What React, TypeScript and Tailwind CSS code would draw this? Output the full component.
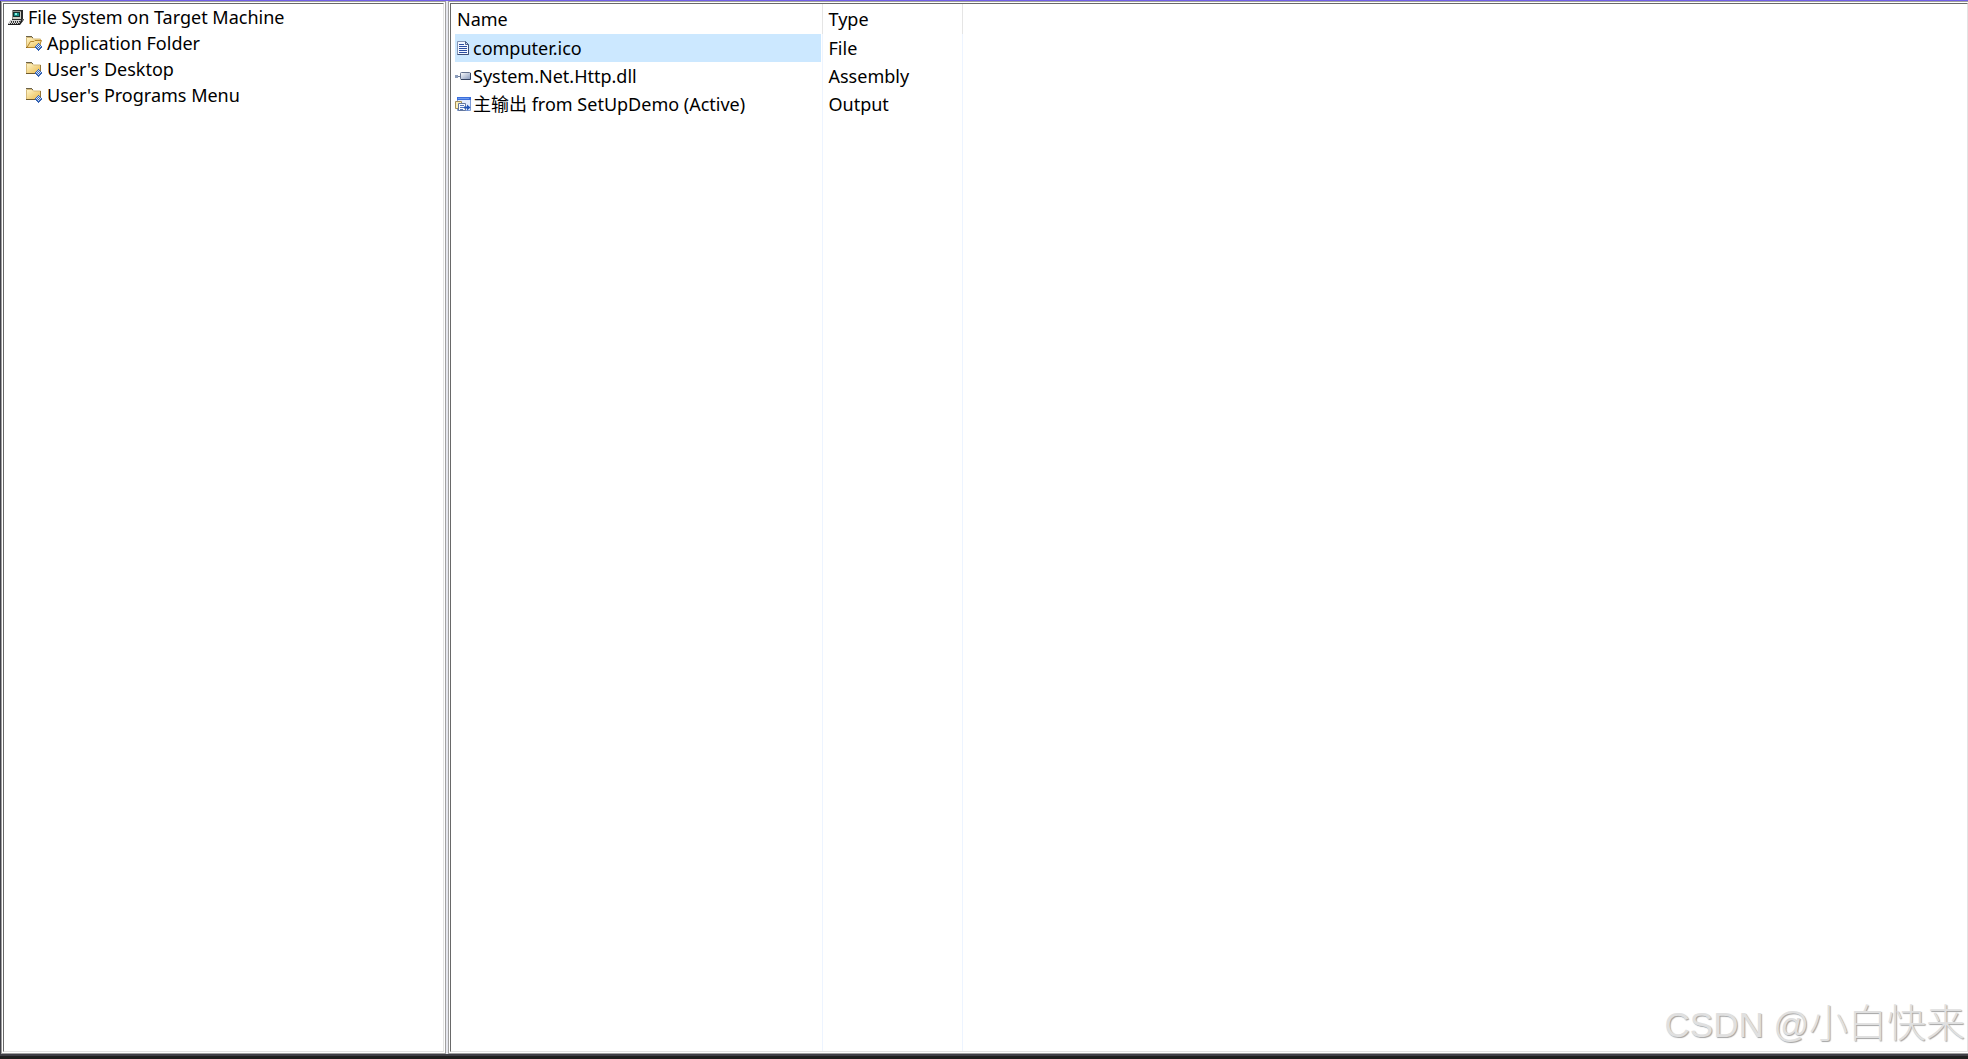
import type { ReactNode } from "react";

function ComputerIcon() {
  return (
    <svg width="16" height="16" viewBox="0 0 16 16" aria-hidden="true" className="shrink-0">
      <path d="M4 2l1-1h10v9l-1 1H4z" fill="#2b2b2b" />
      <path d="M4 2h9v8H4z" fill="#cfcfc6" />
      <path d="M4 2h9v1H5v7H4z" fill="#8f8f88" />
      <path d="M5 3h7v5H5z" fill="#16302f" />
      <path d="M6 4h5v3H6z" fill="#148f86" />
      <path d="M7 4h2v2H7z" fill="#8ff0e4" />
      <path d="M3 11h12v1l-3 4H0v-1z" fill="#1d1d1d" />
      <path d="M3 11h10l-2 4H0z" fill="#d6d6d6" />
      <path d="M3 12.500h9M2 14.500h9" stroke="#2c2c2c" strokeDasharray="1 1" />
      <path d="M3 13.500h8" stroke="#4a4a4a" strokeDasharray="1 1" />
      <path d="M14 10h2v1l-2 2z" fill="#5b5b5b" />
    </svg>
  );
}

function Badge() {
  return (
    <g>
      <path d="M12 8h1v1h1v1h1v1h1v2h-1v1h-1v1h-1v1h-1v-1h-1v-1h-1v-1H9v-2h1v-1h1V9h1z" fill="#3563b4" />
      <path
        d="M12 9h1v1h-1zM11 10h1v1h-1zM13 10h1v1h-1zM10 11h1v1h-1zM14 11h1v1h-1zM11 12h1v1h-1zM13 12h1v1h-1zM12 13h1v1h-1z"
        fill="#c9dbf6"
      />
      <path d="M12 11h1v1h-1z" fill="#ffffff" />
    </g>
  );
}

function FolderIcon({ open }: { open?: boolean }) {
  return (
    <svg width="16" height="16" viewBox="0 0 16 16" aria-hidden="true" className="shrink-0">
      <defs>
        <linearGradient id="folder-fill" x1="0" y1="0" x2="1" y2="1">
          <stop offset="0" stopColor="#fff6cb" />
          <stop offset="1" stopColor="#eab94a" />
        </linearGradient>
      </defs>
      <path d="M.5 12.500V2.500h5.500L7.500 4h7v8.500z" fill="url(#folder-fill)" stroke="#d3b878" />
      <path d="M0 1.500h6M6.500 2v1" fill="none" stroke="#6b6247" />
      <path d="M0 12.500h12" stroke="#6f5a2c" />
      {open ? (
        <path d="M1 12.500L4.500 6.500H8l1-1h6.500l-3 7z" fill="url(#folder-fill)" stroke="#b5852b" />
      ) : (
        <path d="M14.500 4v6" fill="none" stroke="#93763a" />
      )}
      <Badge />
    </svg>
  );
}

function FileIcon() {
  return (
    <svg width="16" height="16" viewBox="0 0 16 16" aria-hidden="true" className="shrink-0">
      <path d="M2.500 1.500h8l3 3v10h-11z" fill="#f4f8ff" stroke="#8595b4" />
      <path d="M13.500 4.500v10h-11" fill="none" stroke="#3d4f78" />
      <path d="M10.500 1.500v3h3z" fill="#cbd8ee" stroke="#4d618c" />
      <path d="M4 4.500h5M4 6.500h8M4 8.500h8M4 10.500h8M4 12.500h8" stroke="#2c4ea2" />
    </svg>
  );
}

function AssemblyIcon() {
  return (
    <svg width="16" height="16" viewBox="0 0 16 16" aria-hidden="true" className="shrink-0">
      <defs>
        <linearGradient id="plug-fill" x1="0" y1="0" x2="1" y2="1">
          <stop offset="0" stopColor="#ffffff" />
          <stop offset="1" stopColor="#8294b8" />
        </linearGradient>
      </defs>
      <path d="M0 7h3v3H0z" fill="#8c9dbb" />
      <path d="M3 8.500h3" stroke="#6c7c99" />
      <rect x="5.500" y="4.500" width="10" height="7" rx="1" fill="url(#plug-fill)" stroke="#64718d" />
      <path d="M6 11.500h9.500V5" fill="none" stroke="#36435f" />
    </svg>
  );
}

function OutputIcon() {
  return (
    <svg width="16" height="16" viewBox="0 0 16 16" aria-hidden="true" className="shrink-0">
      <path d="M2.500 1.500h13v13h-13z" fill="#e3ecfd" stroke="#7d9bd6" />
      <path d="M2 1h14v3H2z" fill="#3b6fdb" />
      <path d="M3 2h11v1H3z" fill="#6f9bf0" />
      <path d="M.5 5.500h6v7h-6z" fill="#fdf0b8" stroke="#a58e58" />
      <path d="M3.500 7.500h7v7h-7z" fill="#f7faff" stroke="#6478a0" />
      <path d="M5 9.500h4M5 11.500h4M5 13.500h3" stroke="#5476b8" />
      <path d="M9 10.500h3v-2l3.500 3-3.500 3v-2H9z" fill="#2557b8" />
    </svg>
  );
}

const folders = [
  { label: "Application Folder", open: true },
  { label: "User's Desktop", open: false },
  { label: "User's Programs Menu", open: false },
];

const files: { name: string; type: string; icon: ReactNode; selected?: boolean }[] = [
  { name: "computer.ico", type: "File", icon: <FileIcon />, selected: true },
  { name: "System.Net.Http.dll", type: "Assembly", icon: <AssemblyIcon /> },
  { name: "主输出 from SetUpDemo (Active)", type: "Output", icon: <OutputIcon /> },
];

function Pane({ className, children }: { className: string; children: ReactNode }) {
  return (
    <div className={`flex border border-[#a0a0a0] bg-white p-px ${className}`}>
      <div className="min-w-0 flex-1 border border-t-[#696969] border-r-[#e3e3e3] border-b-[#e3e3e3] border-l-[#696969]">
        {children}
      </div>
    </div>
  );
}

export default function App() {
  return (
    <div className="relative flex h-screen flex-col overflow-hidden border-t border-t-[#7160e8] bg-[#1f1f1f] font-['Noto_Sans','Noto_Sans_CJK_SC',sans-serif] text-[18px] leading-[26px] text-black">
      <main className="flex min-h-0 flex-1 border-b-2 border-l border-[#3f3f46] bg-[#e6e7ee]">
        <Pane className="w-[445px] shrink-0">
          <ul className="pl-1">
            <li>
              <div className="flex h-[26px] items-center gap-1 whitespace-nowrap">
                <ComputerIcon />
                File System on Target Machine
              </div>
              <ul className="pl-[18px]">
                {folders.map((folder) => (
                  <li key={folder.label} className="flex h-[26px] items-center gap-[5px] whitespace-nowrap">
                    <FolderIcon open={folder.open} />
                    {folder.label}
                  </li>
                ))}
              </ul>
            </li>
          </ul>
        </Pane>
        <Pane className="ml-0.5 min-w-0 flex-1 border-r-0 pr-0">
          <table className="h-full w-full table-fixed border-collapse text-left">
            <colgroup>
              <col className="w-[371px]" />
              <col className="w-[140px]" />
              <col />
            </colgroup>
            <thead>
              <tr className="h-[30px]">
                <th className="border-r border-[#e5e5e5] p-0 pl-1.5 font-normal">Name</th>
                <th className="border-r border-[#e5e5e5] p-0 pl-1.5 font-normal">Type</th>
                <td />
              </tr>
            </thead>
            <tbody>
              {files.map((file) => (
                <tr key={file.name} className="h-7">
                  <td className="border-r border-[#edf4ff] p-0 pr-px pl-1">
                    <div
                      className={`flex h-7 items-center whitespace-nowrap ${file.selected ? "bg-[#cce8ff]" : ""}`}
                    >
                      {file.icon}
                      <span className="pl-0.5">{file.name}</span>
                    </div>
                  </td>
                  <td className="border-r border-[#edf4ff] p-0 pl-1.5">{file.type}</td>
                  <td />
                </tr>
              ))}
              <tr>
                <td className="border-r border-[#edf4ff]" />
                <td className="border-r border-[#edf4ff]" />
                <td />
              </tr>
            </tbody>
          </table>
        </Pane>
      </main>
      <div className="h-[3px] shrink-0 bg-[#1f1f1f]" />
      <p className="pointer-events-none absolute right-[3px] bottom-2.5 font-['Liberation_Sans','Noto_Sans_CJK_SC',sans-serif] text-[35px] leading-[48px] font-light whitespace-nowrap text-[#e0e0e0] [text-shadow:1px_1px_1px_#a3a3a3]">
        CSDN @<span className="text-[39px]">小白快来</span>
      </p>
    </div>
  );
}
